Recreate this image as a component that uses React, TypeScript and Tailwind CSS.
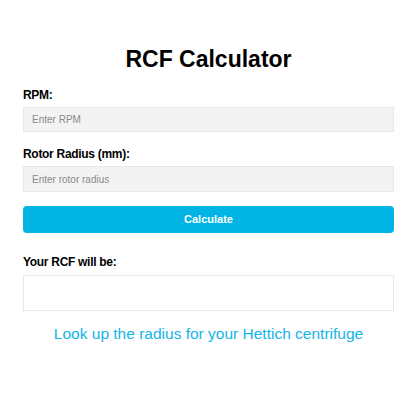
import { useState } from 'react';

export default function App() {
    const [rpm, setRpm] = useState('');
    const [radius, setRadius] = useState('');
    const [rcf, setRcf] = useState('');

    const calculate = () => {
        const r = parseFloat(rpm);
        const rad = parseFloat(radius);
        if (isNaN(r) || isNaN(rad)) return;
        setRcf((1.118e-6 * (rad / 10) * r * r).toFixed(2));
    };

    return (
        <div className="min-h-[400px] w-full bg-white font-['Liberation_Sans',Arial,sans-serif] text-black">
            <div className="mx-auto w-[371px] pt-[45px]">
                <h1 className="text-center text-[23px] font-bold leading-[28px]">RCF Calculator</h1>

                {/* RPM */}
                <label className="mt-[15px] block text-[12px] font-bold leading-[15px] tracking-[-0.3px]">RPM:</label>
                <input
                    value={rpm}
                    onChange={(e) => setRpm(e.target.value)}
                    placeholder="Enter RPM"
                    className="mt-[4px] block h-[25px] w-full border border-[#e8e8e8] bg-[#f3f3f3] px-[8px] text-[10px] outline-none placeholder:text-[#8a8a8a]"
                />

                {/* Rotor radius */}
                <label className="mt-[15px] block text-[12px] font-bold leading-[15px] tracking-[-0.3px]">Rotor Radius (mm):</label>
                <input
                    value={radius}
                    onChange={(e) => setRadius(e.target.value)}
                    placeholder="Enter rotor radius"
                    className="mt-[4px] block h-[26px] w-full border border-[#e8e8e8] bg-[#f3f3f3] px-[8px] text-[10px] outline-none placeholder:text-[#8a8a8a]"
                />

                <button
                    onClick={calculate}
                    className="mt-[14px] block h-[27px] w-full cursor-pointer rounded-[4px] bg-[#00b5e3] text-[11px] font-bold text-white"
                >
                    Calculate
                </button>

                {/* Result */}
                <label className="mt-[22px] block text-[12px] font-bold leading-[15px] tracking-[-0.3px]">Your RCF will be:</label>
                <div className="mt-[5px] h-[36px] w-full border border-[#e8e8e8] bg-white px-[8px] text-[12px] leading-[34px]">
                    {rcf}
                </div>

                <a href="#" className="mt-[14px] block text-center text-[15.5px] leading-[18px] text-[#14b4e6]">
                    Look up the radius for your Hettich centrifuge
                </a>
            </div>
        </div>
    );
}
